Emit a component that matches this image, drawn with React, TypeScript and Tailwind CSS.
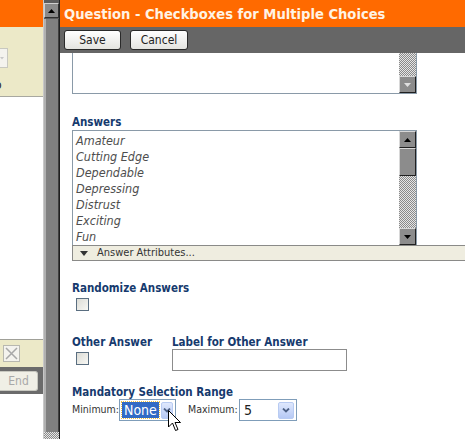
const font = "font-['DejaVu_Sans_Condensed','Liberation_Sans',sans-serif]";

const answers = ["Amateur", "Cutting Edge", "Dependable", "Depressing", "Distrust", "Exciting", "Fun"];

const Checker = ({ className }: { className: string }) => (
  <div
    className={`bg-[repeating-conic-gradient(#8a8a8a_0_25%,#e6e6e6_0_50%)] bg-[length:2px_2px] ${className}`}
  />
);

const ScrollButton = ({ up, dim }: { up?: boolean; dim?: boolean }) => (
  <div className="h-[17px] w-[17px] shrink-0 flex items-center justify-center bg-[#8c8c8c] border border-t-[#d8d8d8] border-l-[#d8d8d8] border-r-[#202020] border-b-[#202020]">
    <svg width="7" height="4" viewBox="0 0 7 4">
      {up ? (
        <path d="M0 4 L3.5 0 L7 4 Z" fill="#000" />
      ) : (
        <path d="M0 0 L7 0 L3.5 4 Z" fill={dim ? "#e0e0e0" : "#000"} />
      )}
    </svg>
  </div>
);

const Label = ({ children }: { children: React.ReactNode }) => (
  <div className="text-[11.5px] leading-[14px] font-bold text-[#163a6e] whitespace-nowrap">{children}</div>
);

const Checkbox = () => (
  <div className="mt-[3px] ml-[4px] h-[13px] w-[13px] border border-[#5a6e80] bg-[linear-gradient(135deg,#dcdcd6,#f8f8f4)]" />
);

const Select = ({ value, selected, width }: { value: string; selected?: boolean; width: string }) => (
  <div className={`h-[22px] ${width} shrink-0 border border-[#7f9db9] bg-white flex items-center p-[2px] gap-[2px]`}>
    <div className="flex-1 h-full flex items-center">
      <span
        className={`h-full flex items-center px-[2px] text-[14px] ${
          selected ? "bg-[#316ac5] text-white outline outline-1 outline-dotted outline-[#f0c040]" : "text-[#222]"
        }`}
      >
        {value}
      </span>
    </div>
    <div className="h-[17px] w-[16px] rounded-[2px] border border-[#b8cbf2] bg-[linear-gradient(#dfe8fd,#b6c9f5)] flex items-center justify-center">
      <svg width="8" height="5" viewBox="0 0 8 5">
        <path d="M1 0.5 L4 3.5 L7 0.5" fill="none" stroke="#4d6185" strokeWidth="1.8" />
      </svg>
    </div>
  </div>
);

export default function App() {
  return (
    <div className={`w-[465px] h-[439px] flex overflow-hidden relative bg-white ${font}`}>
      {/* left panel, partly hidden */}
      <div className="w-[44px] shrink-0 flex flex-col border-r border-[#c8c8c8]">
        <div className="h-[27px] bg-[#ff6a00]" />
        <div className="h-[70px] bg-[#ece9c8] border-b border-[#a8a8a0] flex flex-col">
          <div className="mt-[21px] h-[20px] w-[8px] border border-l-0 border-[#c8c8c0] bg-[#f4f3ee] flex items-center">
            <svg width="4" height="4" viewBox="0 0 4 4">
              <path d="M0 1 L4 1 L2 3.5 Z" fill="#c8c8c8" />
            </svg>
          </div>
          <div className="mt-[11px] -ml-[5px] text-[12px] leading-[12px] text-[#222]">o</div>
        </div>
        <div className="flex-1 bg-white" />
        <div className="h-[28px] bg-[#ece9c8] border-t border-[#a0a098] flex items-center pl-[3px]">
          <div className="h-[17px] w-[17px] border border-[#b8b8b0] bg-[#f4f3ee] flex items-center justify-center">
            <svg width="13" height="13" viewBox="0 0 13 13">
              <path d="M1 1 L12 12 M12 1 L1 12" stroke="#a8a8a8" strokeWidth="1.5" />
            </svg>
          </div>
        </div>
        <div className="h-[27px] bg-[#6b6b6b] flex items-center">
          <div className="h-[20px] w-[38px] rounded-r-[3px] bg-[#f0efe6] border border-l-0 border-[#c8c8c0] flex items-center justify-center text-[12px] text-[#a8a8a8]">
            End
          </div>
        </div>
        <div className="h-[45px] bg-white" />
      </div>

      {/* page scrollbar */}
      <div className="w-[15px] shrink-0 flex flex-col bg-[#5c5c5c]">
        <div className="h-[3px]" />
        <div className="h-[15px] bg-[#8a8a8a] border border-t-[#d0d0d0] border-l-[#d0d0d0] border-r-[#303030] border-b-[#303030] flex items-center justify-center">
          <svg width="7" height="4" viewBox="0 0 7 4">
            <path d="M0 4 L3.5 0 L7 4 Z" fill="#000" />
          </svg>
        </div>
        <div className="flex-1 bg-[#808080] border-l-2 border-[#b0b0b0] border-r border-r-[#404040] mt-[1px]" />
        <Checker className="h-[7px]" />
      </div>

      {/* dialog */}
      <div className="flex-1 flex flex-col border-l border-[#202020]">
        <div className="h-[27px] bg-[#ff6a00] flex items-center pl-[4px]">
          <span className="text-[14.6px] font-bold text-[#fff3e4] whitespace-nowrap">
            Question - Checkboxes for Multiple Choices
          </span>
        </div>
        <div className="h-[26px] bg-[#666666] flex items-center gap-[9px] pl-[4px]">
          <button className="h-[20px] w-[57px] rounded-[3px] border border-[#2a2a2a] bg-[linear-gradient(#ffffff,#e4e4e0)] text-[12px] text-[#222]">
            Save
          </button>
          <button className="h-[20px] w-[58px] rounded-[3px] border border-[#2a2a2a] bg-[linear-gradient(#ffffff,#e4e4e0)] text-[12px] text-[#222]">
            Cancel
          </button>
        </div>

        <div className="flex-1 pl-[12px] flex flex-col">
          {/* textarea, scrolled so its top is hidden */}
          <div className="h-[41px] w-[345px] border-x border-b border-[#8a9aa8] flex justify-end">
            <div className="w-[17px] flex flex-col">
              <Checker className="flex-1" />
              <ScrollButton dim />
            </div>
          </div>

          <div className="mt-[21px]">
            <Label>Answers</Label>
          </div>
          <div className="mt-[1px] h-[116px] w-[345px] border border-[#8a9aa8] flex">
            <div className="flex-1 pl-[3px] pt-[2px]">
              {answers.map((a) => (
                <div key={a} className="h-[16px] leading-[16px] text-[12.5px] italic text-[#4e4e4e]">
                  {a}
                </div>
              ))}
            </div>
            <div className="w-[17px] flex flex-col">
              <ScrollButton up />
              <div className="h-[28px] bg-[#8c8c8c] border border-t-[#d8d8d8] border-l-[#d8d8d8] border-r-[#202020] border-b-[#202020]" />
              <Checker className="flex-1" />
              <ScrollButton />
            </div>
          </div>
          <div className="h-[16px] border-y border-l border-[#8a8a88] bg-[#efede0] flex items-center gap-[9px] pl-[7px] -mt-[1px]">
            <svg width="8" height="5" viewBox="0 0 8 5">
              <path d="M0 0 L8 0 L4 5 Z" fill="#333" />
            </svg>
            <span className="text-[11px] text-[#333]">Answer Attributes...</span>
          </div>

          <div className="mt-[20px]">
            <Label>Randomize Answers</Label>
            <Checkbox />
          </div>

          <div className="mt-[24px] flex gap-[24px]">
            <div className="w-[76px]">
              <Label>Other Answer</Label>
              <Checkbox />
            </div>
            <div>
              <Label>Label for Other Answer</Label>
              <div className="h-[22px] w-[175px] border border-[#8c8c8c] bg-white" />
            </div>
          </div>

          <div className="mt-[14px]">
            <Label>Mandatory Selection Range</Label>
            <div className="flex items-center text-[10.5px] text-[#333]">
              <span className="w-[47px]">Minimum:</span>
              <Select value="None" selected width="w-[57px]" />
              <span className="ml-[12px] w-[51px]">Maximum:</span>
              <Select value="5" width="w-[58px]" />
            </div>
          </div>
        </div>
      </div>

      {/* mouse pointer */}
      <svg className="absolute left-[168px] top-[410px]" width="13" height="22" viewBox="0 0 13 22">
        <path d="M0.5 0.5 L0.5 17 L4.5 13 L7.5 20.5 L10 19.5 L7 12.5 L12.5 12.5 Z" fill="#fff" stroke="#000" strokeWidth="1" />
      </svg>
    </div>
  );
}
